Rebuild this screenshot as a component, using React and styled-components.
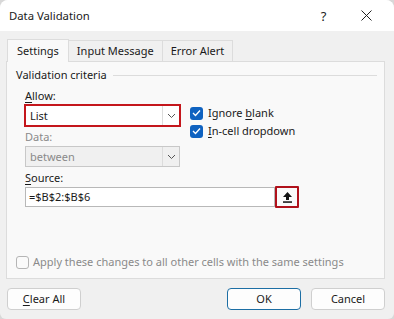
import styled, { createGlobalStyle } from "styled-components";

const Global = createGlobalStyle`
    html, body { margin: 0; padding: 0; background: #d8d8d8; }
    body { font-family: "Noto Sans", "Open Sans", sans-serif; font-size: 11px; line-height: 16px; color: #1a1a1a; }
`;

const Window = styled.div`
    width: 394px;
    height: 319px;
    background: #f0f0f0;
    border-radius: 8px 8px 6px 6px;
    overflow: hidden;
    display: flex;
    flex-direction: column;
`;
const TitleBar = styled.div`
    height: 31px;
    background: #ffffff;
    display: flex;
    align-items: center;
    padding: 0 6px 0 9px;
    font-size: 11.3px;
`;
const TitleText = styled.div`
    flex: 1;
`;
const TitleButton = styled.div`
    width: 43px;
    display: flex;
    align-items: center;
    justify-content: center;
    font-size: 13px;
    color: #222;
`;
const Body = styled.div`
    flex: 1;
    display: flex;
    flex-direction: column;
    padding: 8px 9px 0 6px;
`;
const Tabs = styled.div`
    display: flex;
    height: 22px;
    margin-left: 1px;
`;
const Tab = styled.div`
    padding: 0 ${(p) => (p.active ? 9 : 8)}px;
    display: flex;
    align-items: center;
    border: 1px solid #dcdcdc;
    border-bottom: none;
    border-left: ${(p) => (p.active ? "1px solid #dcdcdc" : "none")};
    background: ${(p) => (p.active ? "#f9f9f9" : "#f0f0f0")};
    margin-top: ${(p) => (p.active ? "0" : "1px")};
    margin-bottom: ${(p) => (p.active ? "-1px" : "0")};
    position: relative;
    z-index: ${(p) => (p.active ? 1 : 0)};
`;
const Panel = styled.div`
    height: 218px;
    box-sizing: border-box;
    background: #f9f9f9;
    border: 1px solid #dcdcdc;
    padding: 5px 0 0 9px;
    display: flex;
    flex-direction: column;
`;
const GroupTitle = styled.div`
    display: flex;
    align-items: center;
    gap: 6px;
    &::after {
        content: "";
        flex: 1;
        height: 1px;
        background: #dcdcdc;
        margin-right: 7px;
    }
`;
const Criteria = styled.div`
    display: grid;
    grid-template-columns: 165px 1fr;
    align-items: start;
    margin-left: 9px;
    margin-top: 5px;
`;
const Field = styled.div`
    grid-column: ${(p) => (p.wide ? "1 / 3" : "1")};
    display: flex;
    flex-direction: column;
    margin-top: ${(p) => p.top || 0}px;
`;
const Label = styled.div`
    color: ${(p) => (p.disabled ? "#8a8a8a" : "#1a1a1a")};
    margin-bottom: ${(p) => p.gap || 0}px;
`;
const Select = styled.div`
    width: ${(p) => (p.highlight ? 157 : 155)}px;
    height: ${(p) => (p.highlight ? 23 : 21)}px;
    box-sizing: border-box;
    margin-left: ${(p) => (p.highlight ? -1 : 0)}px;
    border: ${(p) => (p.highlight ? "2px solid #c4161c" : "1px solid #c8c8c8")};
    background: ${(p) => (p.disabled ? "#f0f0f0" : "#ffffff")};
    color: ${(p) => (p.disabled ? "#8a8a8a" : "#1a1a1a")};
    display: flex;
    align-items: center;
    padding-left: 4px;
`;
const SelectText = styled.div`
    flex: 1;
`;
const Arrow = styled.div`
    width: 16px;
    height: 100%;
    border-left: 1px solid #dcdcdc;
    display: flex;
    align-items: center;
    justify-content: center;
`;
const SourceRow = styled.div`
    display: flex;
    align-items: center;
`;
const Input = styled.div`
    width: 250px;
    height: 20px;
    box-sizing: border-box;
    border: 1px solid #b8b8b8;
    background: #fff;
    display: flex;
    align-items: center;
    padding-left: 3px;
`;
const RefButton = styled.div`
    width: 24px;
    height: 22px;
    box-sizing: border-box;
    border: 2px solid #b0111b;
    border-radius: 1px;
    background: #fafafa;
    display: flex;
    align-items: center;
    justify-content: center;
`;
const Checks = styled.div`
    grid-column: 2;
    grid-row: 1 / 3;
    display: flex;
    flex-direction: column;
    gap: 2px;
    padding-top: 17px;
`;
const CheckRow = styled.div`
    display: flex;
    align-items: center;
    gap: 5px;
    color: ${(p) => (p.disabled ? "#8a8a8a" : "#1a1a1a")};
`;
const Box = styled.div`
    width: 13px;
    height: 13px;
    box-sizing: border-box;
    border-radius: 3px;
    background: ${(p) => (p.checked ? "#0f62c0" : "#fafafa")};
    border: ${(p) => (p.checked ? "none" : "1px solid #b5b5b5")};
    display: flex;
    align-items: center;
    justify-content: center;
`;
const Spacer = styled.div`
    flex: 1;
`;
const ApplyRow = styled(CheckRow)`
    margin-bottom: 8px;
    gap: 4px;
`;
const Footer = styled.div`
    display: flex;
    align-items: center;
    padding: 9px 0 0 1px;
    gap: 10px;
`;
const Button = styled.div`
    width: 74px;
    height: 22px;
    box-sizing: border-box;
    border: 1px solid ${(p) => (p.primary ? "#1c6ea4" : "#cfcfcf")};
    border-radius: 4px;
    background: #fdfdfd;
    display: flex;
    align-items: center;
    justify-content: center;
    margin-left: ${(p) => (p.push ? "auto" : "0")};
`;
const U = styled.span`
    text-decoration: underline;
    text-underline-offset: 2px;
`;

const Chevron = () => (
    <svg width="9" height="6" viewBox="0 0 9 6">
        <path d="M1 1 L4.5 4.5 L8 1" fill="none" stroke="#555" strokeWidth="1" />
    </svg>
);

const Tick = () => (
    <svg width="9" height="8" viewBox="0 0 9 8">
        <path d="M1 4 L3.5 6.5 L8 1.5" fill="none" stroke="#fff" strokeWidth="1.3" />
    </svg>
);

const App = () => {
    return (
        <Window>
            <Global />
            <TitleBar>
                <TitleText>Data Validation</TitleText>
                <TitleButton>?</TitleButton>
                <TitleButton>
                    <svg width="11" height="11" viewBox="0 0 11 11">
                        <path d="M0.5 0.5 L10.5 10.5 M10.5 0.5 L0.5 10.5" stroke="#222" strokeWidth="1" />
                    </svg>
                </TitleButton>
            </TitleBar>
            <Body>
                <Tabs>
                    <Tab active>Settings</Tab>
                    <Tab>Input Message</Tab>
                    <Tab>Error Alert</Tab>
                </Tabs>
                <Panel>
                    <GroupTitle>Validation criteria</GroupTitle>
                    <Criteria>
                        <Field>
                            <Label><U>A</U>llow:</Label>
                            <Select highlight>
                                <SelectText>List</SelectText>
                                <Arrow><Chevron /></Arrow>
                            </Select>
                        </Field>
                        <Checks>
                            <CheckRow>
                                <Box checked><Tick /></Box>
                                <span>Ignore <U>b</U>lank</span>
                            </CheckRow>
                            <CheckRow>
                                <Box checked><Tick /></Box>
                                <span><U>I</U>n-cell dropdown</span>
                            </CheckRow>
                        </Checks>
                        <Field top={2}>
                            <Label disabled gap={1}>Data:</Label>
                            <Select disabled>
                                <SelectText>between</SelectText>
                                <Arrow><Chevron /></Arrow>
                            </Select>
                        </Field>
                        <Field wide top={3}>
                            <Label><U>S</U>ource:</Label>
                            <SourceRow>
                                <Input>=$B$2:$B$6</Input>
                                <RefButton>
                                    <svg width="11" height="12" viewBox="0 0 11 12">
                                        <path d="M5.5 1 L10 6 H7 V9 H4 V6 H1 Z" fill="#111" />
                                        <rect x="1" y="10.3" width="9" height="1.5" fill="#111" />
                                    </svg>
                                </RefButton>
                            </SourceRow>
                        </Field>
                    </Criteria>
                    <Spacer />
                    <ApplyRow disabled>
                        <Box />
                        <span>Apply these changes to all other cells with the same settings</span>
                    </ApplyRow>
                </Panel>
                <Footer>
                    <Button><U>C</U>lear All</Button>
                    <Button primary push>OK</Button>
                    <Button>Cancel</Button>
                </Footer>
            </Body>
        </Window>
    );
};

export default App;
